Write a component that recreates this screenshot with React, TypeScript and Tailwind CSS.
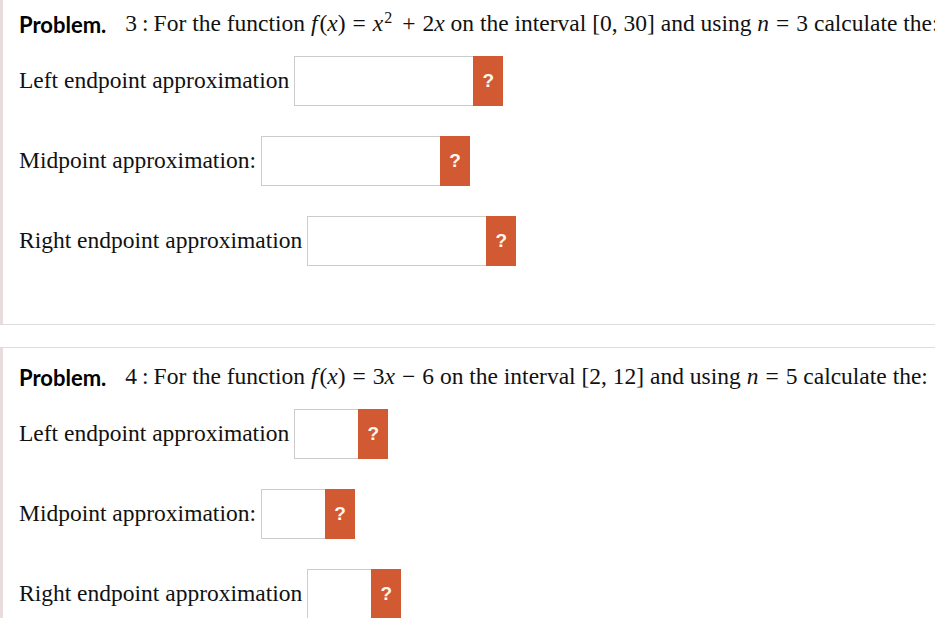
import React from 'react';

const serif = { fontFamily: '"Liberation Serif", "Times New Roman", serif' };

const I: React.FC<{ children: React.ReactNode; className?: string }> = ({ children, className }) => (
  <span className={`italic ${className ?? ''}`}>{children}</span>
);

const Op: React.FC<{ children: React.ReactNode }> = ({ children }) => (
  <span className="mx-[7px]">{children}</span>
);

const AnswerRow: React.FC<{ label: string; inputWidth: string }> = ({ label, inputWidth }) => (
  <div className="flex items-center h-[50px]">
    <span className="mr-[5px] text-[23.5px] text-[#111]">{label}</span>
    <div className={`h-[50px] ${inputWidth} border border-[#cccccc] border-r-0 bg-white`} />
    <div className="flex h-[50px] w-[30px] items-center justify-center bg-[#d15a33]">
      <span className="text-[19px] font-black text-[#fff8ee]" style={{ fontFamily: '"Liberation Sans", Arial, sans-serif' }}>
        ?
      </span>
    </div>
  </div>
);

const Problem: React.FC<{
  num: number;
  expr: React.ReactNode;
  interval: string;
  n: number;
  inputWidth: string;
  first?: boolean;
}> = ({ num, expr, interval, n, inputWidth, first }) => (
  <div
    className={`border-l-[3px] border-l-[#e8dcdc] border-b border-b-[#e0dcdc] pl-[16px] pb-[58px] ${
      first ? 'pt-[10px]' : 'border-t border-t-[#e0dcdc] pt-[15px] mt-[22px]'
    }`}
  >
    <div className="flex h-[28px] items-center whitespace-nowrap text-[23.5px] text-[#111]">
      <span className="font-bold text-[22px] text-black" style={{ fontFamily: 'Lato, "Open Sans", sans-serif' }}>
        Problem.
      </span>
      <span className="ml-[19px]">{num}</span>
      <span className="mx-[5px]">:</span>
      <span>For the function&nbsp;</span>
      {expr}
      <span>&nbsp;on the interval&nbsp;</span>
      <span>{interval}</span>
      <span>&nbsp;and using&nbsp;</span>
      <I>n</I>
      <Op>=</Op>
      <span>{n}</span>
      <span>&nbsp;calculate the:</span>
    </div>
    <div className="mt-[18px] flex flex-col gap-[30px]">
      <AnswerRow label="Left endpoint approximation" inputWidth={inputWidth} />
      <AnswerRow label="Midpoint approximation:" inputWidth={inputWidth} />
      <AnswerRow label="Right endpoint approximation" inputWidth={inputWidth} />
    </div>
  </div>
);

export default function App() {
  return (
    <div className="h-[618px] w-[935px] overflow-hidden bg-white" style={serif}>
      <div className="w-[1000px]">
        <Problem
          first
          num={3}
          interval="[0, 30]"
          n={3}
          inputWidth="w-[179px]"
          expr={
            <span>
              <I className="mr-[2px]">f</I>(<I>x</I>)<Op>=</Op>
              <I>x</I>
              <sup className="ml-[1px] mr-[3px] text-[16px]">2</sup>
              <Op>+</Op>2<I>x</I>
            </span>
          }
        />
        <Problem
          num={4}
          interval="[2, 12]"
          n={5}
          inputWidth="w-[64px]"
          expr={
            <span>
              <I className="mr-[2px]">f</I>(<I>x</I>)<Op>=</Op>3<I>x</I>
              <Op>−</Op>6
            </span>
          }
        />
      </div>
    </div>
  );
}
